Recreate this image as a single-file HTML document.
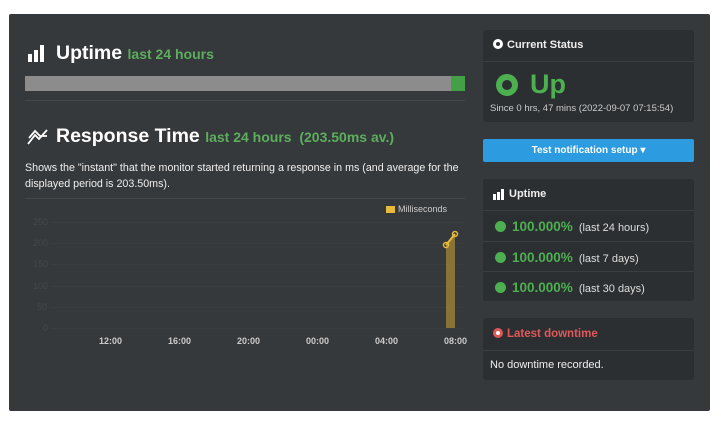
<!DOCTYPE html>
<html><head><style>
*{margin:0;padding:0;box-sizing:border-box}
body{width:721px;height:423px;background:#fff;font-family:"Liberation Sans",sans-serif;position:relative;overflow:hidden}
.panel{position:absolute;left:9px;top:14px;width:701px;height:397px;background:#36393c;border-radius:2px}
.abs{position:absolute}
.g{color:#5cae5c}
.card{position:absolute;left:474px;width:211px;background:#2c2f32;border-radius:3px}
.hd{color:#eee;font-weight:bold;font-size:11px}
.line{position:absolute;left:0;right:0;height:1px;background:#3b3e41}
.row{position:absolute;left:12px;font-size:11px;color:#ddd}
.row b{color:#4caf50;font-size:13.5px;font-weight:bold;margin:0 6px 0 6px}
.dot{display:inline-block;width:11px;height:11px;border-radius:50%;background:#4caf50;vertical-align:-1px}
.yl{position:absolute;left:24px;font-size:9px;color:#45484b}
.xl{position:absolute;top:322px;font-size:9px;font-weight:bold;color:#ccc}
.gl{position:absolute;left:42px;width:413px;height:1px;background:#3a3d40}
</style></head><body>
<div class="panel">
 <svg class="abs" style="left:19px;top:31px" width="20" height="17"><rect x="0" y="9" width="4" height="8" fill="#fff"/><rect x="6" y="5" width="4" height="12" fill="#fff"/><rect x="12" y="0" width="4" height="17" fill="#fff"/></svg>
 <div class="abs" style="left:47px;top:28px;font-size:19.5px;font-weight:bold;color:#fff">Uptime <span class="g" style="font-size:14px">last 24 hours</span></div>
 <div class="abs" style="left:16px;top:62px;width:427px;height:15px;background:#8c8c8c"></div>
 <div class="abs" style="left:442px;top:62px;width:14px;height:15px;background:#44a047"></div>
 <div class="abs" style="left:16px;top:86px;width:440px;height:1px;background:#45484b"></div>
 <svg class="abs" style="left:18px;top:113px" width="22" height="18" fill="none" stroke="#fff" stroke-width="1.8"><path d="M1 17 L8 8 L12 12 L20 3"/><path d="M2 11 L8 4 L13 9 L20 9"/></svg>
 <div class="abs" style="left:47px;top:111px;font-size:19.5px;font-weight:bold;color:#fff">Response Time <span class="g" style="font-size:14px">last 24 hours &nbsp;(203.50ms av.)</span></div>
 <div class="abs" style="left:16px;top:146px;width:445px;font-size:10.7px;line-height:16px;color:#eee">Shows the "instant" that the monitor started returning a response in ms (and average for the displayed period is 203.50ms).</div>
 <div class="abs" style="left:16px;top:184px;width:440px;height:1px;background:#45484b"></div>
 <div class="abs" style="left:377px;top:192px;width:9px;height:7px;background:#e8b93a"></div>
 <div class="abs" style="left:389px;top:190px;font-size:9px;color:#ccc">Milliseconds</div>
 <div class="yl" style="top:203px">250</div><div class="yl" style="top:224px">200</div><div class="yl" style="top:245px">150</div><div class="yl" style="top:267px">100</div><div class="yl" style="top:288px;left:28px">50</div><div class="yl" style="top:309px;left:34px">0</div>
 <div class="gl" style="top:208px"></div><div class="gl" style="top:229px"></div><div class="gl" style="top:250px"></div><div class="gl" style="top:272px"></div><div class="gl" style="top:293px"></div><div class="gl" style="top:314px"></div>
 <div class="xl" style="left:90px">12:00</div><div class="xl" style="left:159px">16:00</div><div class="xl" style="left:228px">20:00</div><div class="xl" style="left:297px">00:00</div><div class="xl" style="left:366px">04:00</div><div class="xl" style="left:435px">08:00</div>
 <svg class="abs" style="left:430px;top:213px" width="20" height="102"><polygon points="7,18 16,7 16,101 7,101" fill="#8a7337"/><line x1="7" y1="18" x2="16" y2="7" stroke="#e8b93a" stroke-width="2"/><circle cx="7" cy="18" r="2.5" fill="none" stroke="#e8b93a" stroke-width="1.5"/><circle cx="16" cy="7" r="2.5" fill="none" stroke="#e8b93a" stroke-width="1.5"/></svg>

 <div class="card" style="top:16px;height:92px">
  <div class="abs hd" style="left:10px;top:9px"><span style="display:inline-block;width:10px;height:10px;border-radius:50%;background:#2c2f32;border:3px solid #fff;vertical-align:-1px;margin-right:4px"></span>Current Status</div>
  <div class="line" style="top:31px"></div>
  <div class="abs" style="left:13px;top:44px;width:22px;height:22px;border-radius:50%;border:6px solid #4caf50;background:#2c2f32"></div>
  <div class="abs" style="left:47px;top:39px;font-size:27px;color:#4caf50;font-weight:bold">Up</div>
  <div class="abs" style="left:7px;top:73px;font-size:9.5px;color:#ccc">Since 0 hrs, 47 mins (2022-09-07 07:15:54)</div>
 </div>
 <div class="abs" style="left:474px;top:125px;width:211px;height:23px;background:#2d9be0;border-radius:2px;color:#fff;font-size:10px;font-weight:bold;text-align:center;line-height:23px">Test notification setup ▾</div>
 <div class="card" style="top:165px;height:122px">
  <svg class="abs" style="left:10px;top:10px" width="12" height="11"><rect x="0" y="5" width="3" height="6" fill="#fff"/><rect x="4" y="3" width="3" height="8" fill="#fff"/><rect x="8" y="0" width="3" height="11" fill="#fff"/></svg>
  <div class="abs hd" style="left:26px;top:9px">Uptime</div>
  <div class="line" style="top:31px"></div>
  <div class="row" style="top:40px"><span class="dot"></span><b>100.000%</b>(last 24 hours)</div>
  <div class="line" style="top:62px"></div>
  <div class="row" style="top:71px"><span class="dot"></span><b>100.000%</b>(last 7 days)</div>
  <div class="line" style="top:92px"></div>
  <div class="row" style="top:101px"><span class="dot"></span><b>100.000%</b>(last 30 days)</div>
 </div>
 <div class="card" style="top:304px;height:62px">
  <div class="abs hd" style="left:10px;top:10px;color:#e05858;font-size:11.5px"><span style="display:inline-block;width:10px;height:10px;border-radius:50%;border:3px solid #e05858;background:#fff;vertical-align:-1px;margin-right:4px"></span>Latest downtime</div>
  <div class="line" style="top:32px"></div>
  <div class="abs" style="left:7px;top:41px;font-size:11px;color:#eee">No downtime recorded.</div>
 </div>
</div>
</body></html>
